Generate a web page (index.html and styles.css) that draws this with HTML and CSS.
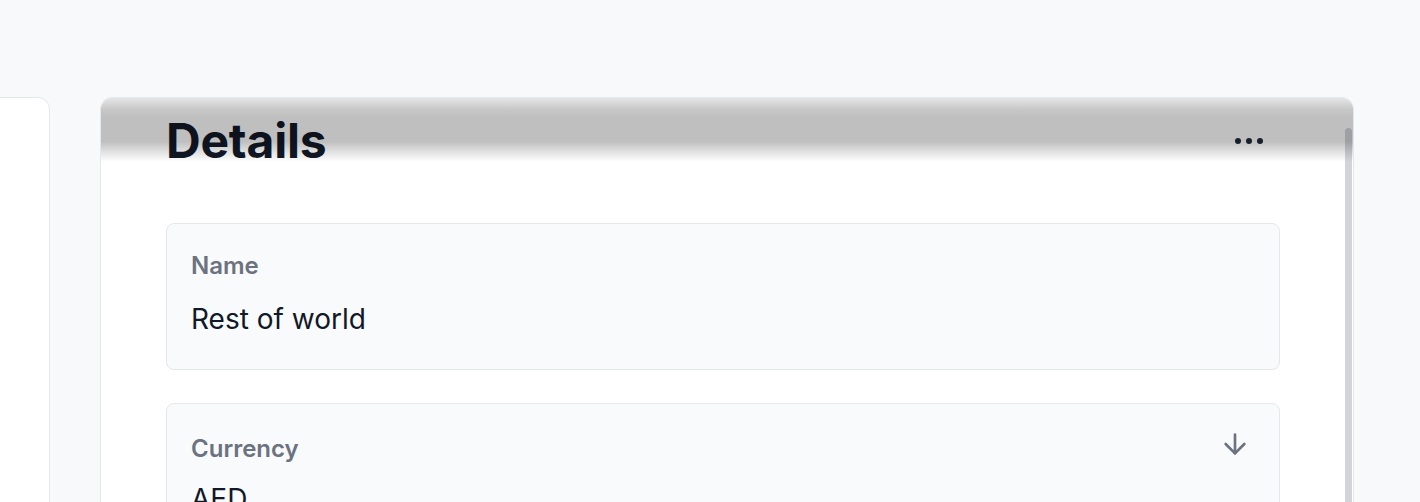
FILE: index.html
```html
<!DOCTYPE html>
<html lang="en">
<head>
<meta charset="utf-8">
<title>Details</title>
<link rel="stylesheet" href="styles.css">
</head>
<body>
<div class="layout">
  <aside class="side-panel"></aside>
  <section class="panel">
    <div class="panel-scroll">
      <header class="panel-header">
        <h1 class="title">Details</h1>
        <button class="more" type="button" aria-label="More">
          <svg width="30" height="8" viewBox="0 0 30 8"><circle cx="4" cy="4" r="3" fill="#1f2937"/><circle cx="15" cy="4" r="3" fill="#1f2937"/><circle cx="26" cy="4" r="3" fill="#1f2937"/></svg>
        </button>
      </header>
      <div class="field">
        <div class="field-label">Name</div>
        <div class="field-value">Rest of world</div>
      </div>
      <div class="field">
        <div class="field-head">
          <div class="field-label">Currency</div>
          <svg class="arrow" width="32" height="32" viewBox="0 0 24 24" fill="none" stroke="#6b7280" stroke-width="2" stroke-linecap="round" stroke-linejoin="round"><path d="M12 5v14"/><path d="m19 12-7 7-7-7"/></svg>
        </div>
        <div class="field-value">AED</div>
      </div>
    </div>
    <div class="scrollbar"><div class="thumb"></div></div>
    <div class="header-shade"></div>
  </section>
</div>
</body>
</html>
```
FILE: styles.css
```css
html, body {
  margin: 0;
  padding: 0;
  height: 502px;
  overflow: hidden;
  background: #f8f9fb;
  font-family: Inter, "Noto Sans", sans-serif;
}

.layout {
  display: flex;
  gap: 50px;
  padding-top: 97px;
  margin-left: -30px;
}

.side-panel {
  width: 80px;
  height: 600px;
  background: #fff;
  border: 1px solid #e5e7eb;
  border-radius: 12px;
  box-sizing: border-box;
}

.panel {
  position: relative;
  width: 1254px;
  height: 600px;
  box-sizing: border-box;
  background: #fff;
  border: 1px solid #e5e7eb;
  border-radius: 12px;
  display: flex;
  overflow: hidden;
}

.panel-scroll {
  flex: 1;
  padding: 19px 65px 0 65px;
}

.panel-header {
  display: flex;
  align-items: center;
  justify-content: space-between;
  margin-bottom: 58px;
}

.title {
  margin: 0;
  font-size: 48px;
  line-height: 48px;
  font-weight: 700;
  color: #111827;
  letter-spacing: -0.2px;
}

.more {
  border: 0;
  background: transparent;
  padding: 0;
  margin-right: 16px;
  display: flex;
  align-items: center;
  height: 30px;
}

.field {
  background: #f9fafb;
  border: 1px solid #e5e7eb;
  border-radius: 8px;
  padding: 26px 25px 30px 24px;
  margin-bottom: 33px;
}

.field-head {
  display: flex;
  align-items: flex-start;
  justify-content: space-between;
}

.field-head .field-label {
  padding-top: 3px;
}

.field-head + .field-value {
  margin-top: 14px;
}

.arrow {
  margin-right: 3px;
  margin-top: -2px;
}

.field-label {
  font-size: 24px;
  line-height: 32px;
  font-weight: 600;
  color: #6b7280;
}

.field-value {
  margin-top: 17px;
  font-size: 28px;
  line-height: 40px;
  color: #111827;
}

.scrollbar {
  width: 8px;
  padding-top: 30px;
}

.thumb {
  width: 7px;
  height: 600px;
  background: #d1d5db;
  border-radius: 4px 4px 0 0;
}

.header-shade {
  position: absolute;
  top: 0;
  left: 0;
  right: 0;
  height: 64px;
  border-radius: 11px 11px 0 0;
  pointer-events: none;
  background: linear-gradient(to bottom,
    rgba(0,0,0,0.10) 0%,
    rgba(0,0,0,0.22) 18%,
    rgba(0,0,0,0.25) 30%,
    rgba(0,0,0,0.25) 68%,
    rgba(0,0,0,0.10) 86%,
    rgba(0,0,0,0) 100%);
}
```
